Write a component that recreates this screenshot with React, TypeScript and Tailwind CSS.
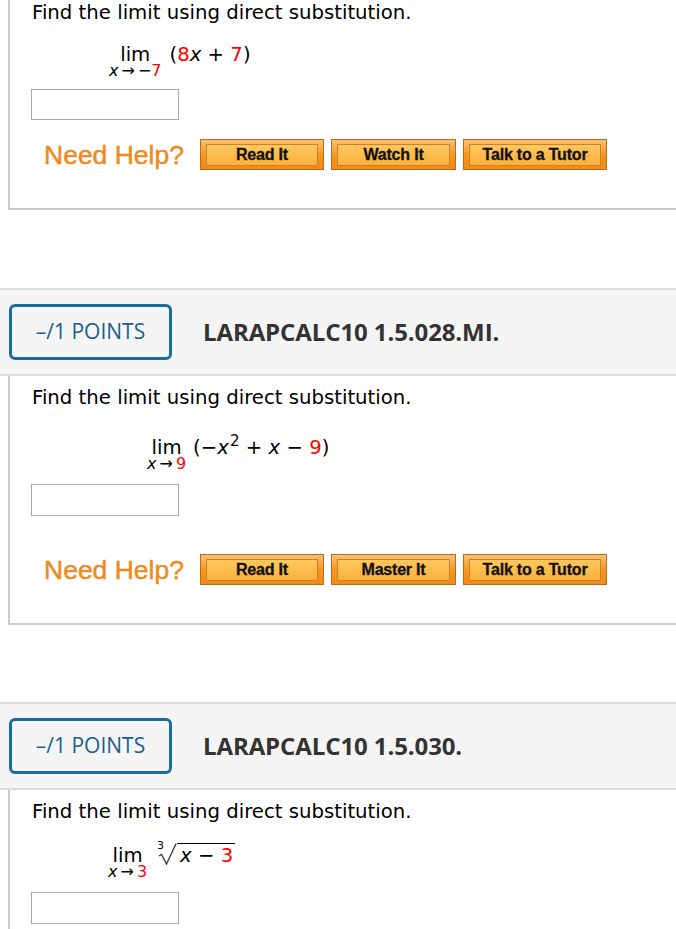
import type { ReactNode } from 'react';

const body = { fontFamily: '"DejaVu Sans", Verdana, sans-serif' };
const arial = { fontFamily: '"Liberation Sans", Arial, sans-serif' };
const open = { fontFamily: '"Open Sans", "DejaVu Sans", sans-serif' };

const Red = ({ children }: { children: ReactNode }) => <span className="text-[#ff0000]">{children}</span>;
const X = () => <span className="italic">x</span>;

const Lim = ({ to }: { to: ReactNode }) => (
    <span className="flex flex-col items-center">
        <span className="text-[19.7px] leading-[18px]">lim</span>
        <span className="text-[16px] leading-[16px] -mt-px whitespace-nowrap">
            <X />
            <span className="mx-[3px]">→</span>
            {to}
        </span>
    </span>
);

const HelpButton = ({ label, width }: { label: string; width: string }) => (
    <button
        className={`${width} h-[31px] border border-[#b46c1e] bg-linear-to-b from-[#fcc070] via-[#f7961f] to-[#f48a12] pt-[4px] pb-[3px] px-[5px]`}
    >
        <span
            style={arial}
            className="flex h-full items-center justify-center border border-[#c9832f] bg-linear-to-b from-[#ffc85e] to-[#fbb03b] text-[16px] font-bold tracking-[-0.2px] text-[#111] [-webkit-text-stroke:0.3px_#111]"
        >
            {label}
        </span>
    </button>
);

const NeedHelp = ({ second }: { second: string }) => (
    <div className="flex items-center">
        <span style={arial} className="ml-[12px] w-[156px] text-[26.5px] leading-[28px] text-[#ef8a1f] [-webkit-text-stroke:0.5px_#ef8a1f]">
            Need Help?
        </span>
        <div className="flex gap-[7px]">
            <HelpButton label="Read It" width="w-[124px]" />
            <HelpButton label={second} width="w-[125px]" />
            <HelpButton label="Talk to a Tutor" width="w-[144px]" />
        </div>
    </div>
);

const Header = ({ code, mt }: { code: string; mt: string }) => (
    <div className={`${mt} flex h-[88px] items-center border-y-2 border-[#dddddd] bg-[#f5f5f5] pl-[9px]`}>
        <div
            style={open}
            className="flex h-[56px] w-[163px] items-center justify-center rounded-[6px] border-[3px] border-[#1d6aa0] text-[21px] text-[#1b5e8e]"
        >
            –/1 POINTS
        </div>
        <div style={open} className="ml-[31px] text-[24px] font-bold tracking-[-0.1px] text-[#333333]">
            {code}
        </div>
    </div>
);

type QProps = {
    pt: string;
    mathMt: string;
    indent: string;
    exprMl: string;
    inputMt: string;
    inputH: string;
    helpMt: string;
    limTo: ReactNode;
    expr: ReactNode;
    second?: string;
};

const Question = ({ pt, mathMt, indent, exprMl, inputMt, inputH, helpMt, limTo, expr, second }: QProps) => (
    <div style={body} className={`ml-[8px] border-l-2 border-b-2 border-[#cccccc] pl-[22px] ${pt} pb-[38px] text-black`}>
        <p className="text-[19.7px] leading-[23px]">Find the limit using direct substitution.</p>
        <div className={`flex items-baseline ${mathMt} ${indent}`}>
            <Lim to={limTo} />
            <span className={`${exprMl} text-[19.7px] leading-[18px] whitespace-nowrap`}>{expr}</span>
        </div>
        <div className={`${inputMt} -ml-px ${inputH} w-[148px] border border-[#a9a9a9] bg-white`} />
        {second && <div className={helpMt}><NeedHelp second={second} /></div>}
    </div>
);

const CubeRoot = () => (
    <span className="relative">
        <span className="absolute -left-[1px] -top-[4px] text-[11px] leading-none">3</span>
        <svg width="19" height="22" viewBox="0 0 19 22" className="inline-block align-[-3px]">
            <polyline points="1,13 3.5,11.5 8.5,21 18,0.8" fill="none" stroke="#333" strokeWidth="1.3" />
        </svg>
        <span className="border-t-[1.5px] border-black pl-[3px] pr-[2px]">
            <X /> − <Red>3</Red>
        </span>
    </span>
);

export default function App() {
    return (
        <div className="h-[929px] w-[676px] overflow-hidden bg-white">
            <Question
                pt="pt-[1px]"
                mathMt="mt-[22px]"
                indent="ml-[77px]"
                exprMl="ml-[8px]"
                inputMt="mt-[10px]"
                inputH="h-[31px]"
                helpMt="mt-[19px]"
                limTo={<>−<Red>7</Red></>}
                expr={<>(<Red>8</Red><X /> + <Red>7</Red>)</>}
                second="Watch It"
            />
            <Header code="LARAPCALC10 1.5.028.MI." mt="mt-[78px]" />
            <Question
                pt="pt-[10px]"
                mathMt="mt-[30px]"
                indent="ml-[115px]"
                exprMl="ml-[7px]"
                inputMt="mt-[12px]"
                inputH="h-[32px]"
                helpMt="mt-[38px]"
                limTo={<Red>9</Red>}
                expr={
                    <>
                        (−<X />
                        <span className="relative -top-[8px] ml-px text-[15px] leading-none">2</span> + <X /> − <Red>9</Red>)
                    </>
                }
                second="Master It"
            />
            <Header code="LARAPCALC10 1.5.030." mt="mt-[77px]" />
            <Question
                pt="pt-[10px]"
                mathMt="mt-[20px]"
                indent="ml-[76px]"
                exprMl="ml-[11px]"
                inputMt="mt-[12px]"
                inputH="h-[32px]"
                helpMt="mt-[38px]"
                limTo={<Red>3</Red>}
                expr={<CubeRoot />}
            />
        </div>
    );
}
